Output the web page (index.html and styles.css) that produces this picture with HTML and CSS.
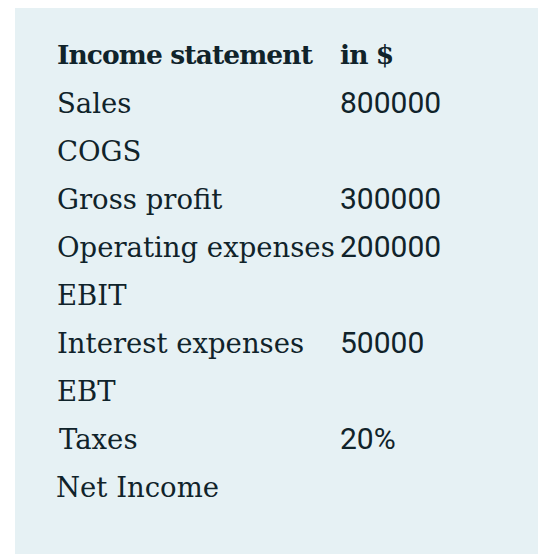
FILE: index.html
```html
<!DOCTYPE html>
<html>
<head>
<meta charset="utf-8">
<link rel="stylesheet" href="styles.css">
</head>
<body>
<div class="panel">
  <div class="table">
    <div class="label head">Income statement</div><div class="value head">in $</div>
    <div class="label">Sales</div><div class="value">800000</div>
    <div class="label">COGS</div><div class="value"></div>
    <div class="label">Gross profit</div><div class="value">300000</div>
    <div class="label">Operating expenses</div><div class="value">200000</div>
    <div class="label">EBIT</div><div class="value"></div>
    <div class="label">Interest expenses</div><div class="value">50000</div>
    <div class="label">EBT</div><div class="value"></div>
    <div class="label taxes">Taxes</div><div class="value">20%</div>
    <div class="label net">Net Income</div><div class="value"></div>
  </div>
</div>
</body>
</html>
```
FILE: styles.css
```css
html, body {
  margin: 0;
  padding: 0;
  background: #ffffff;
}
body {
  padding: 8px 0 0 15px;
  height: 554px;
  box-sizing: border-box;
  overflow: hidden;
}
.panel {
  background: #e6f1f4;
  height: 560px;
  padding: 23px 0 0 42px;
  box-sizing: border-box;
}
.table {
  display: grid;
  grid-template-columns: 283px auto;
  grid-auto-rows: 48px;
  color: #10232a;
}
.label {
  font-family: "DejaVu Serif", serif;
  font-size: 27.5px;
  line-height: 48px;
  white-space: nowrap;
}
.value {
  font-family: "Roboto", sans-serif;
  font-size: 30px;
  line-height: 48px;
}
.head {
  font-family: "DejaVu Serif", serif;
  font-weight: bold;
  font-size: 26.5px;
  letter-spacing: -0.9px;
}
.taxes {
  padding-left: 2px;
}
.net {
  margin-left: -1px;
}
```
